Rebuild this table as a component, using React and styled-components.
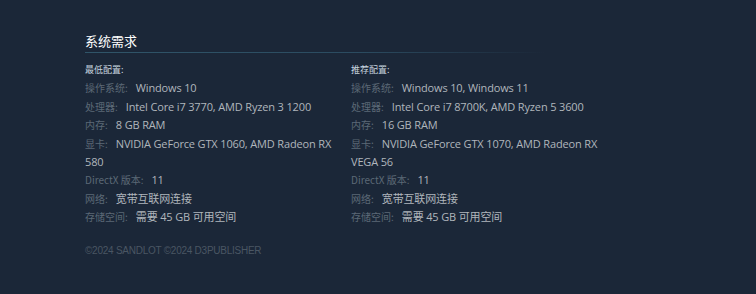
import React from "react";
import styled, { createGlobalStyle } from "styled-components";

const GlobalStyle = createGlobalStyle`
  html, body {
    margin: 0;
    padding: 0;
    background: #1b2738;
  }
`;

const minimum = [
  ["操作系统:", "Windows 10"],
  ["处理器:", "Intel Core i7 3770, AMD Ryzen 3 1200"],
  ["内存:", "8 GB RAM"],
  ["显卡:", "NVIDIA GeForce GTX 1060, AMD Radeon RX 580"],
  ["DirectX 版本:", "11"],
  ["网络:", "宽带互联网连接"],
  ["存储空间:", "需要 45 GB 可用空间"],
];

const recommended = [
  ["操作系统:", "Windows 10, Windows 11"],
  ["处理器:", "Intel Core i7 8700K, AMD Ryzen 5 3600"],
  ["内存:", "16 GB RAM"],
  ["显卡:", "NVIDIA GeForce GTX 1070, AMD Radeon RX VEGA 56"],
  ["DirectX 版本:", "11"],
  ["网络:", "宽带互联网连接"],
  ["存储空间:", "需要 45 GB 可用空间"],
];

const App = () => {
  return (
    <>
      <GlobalStyle />
      <Page>
        <Title>系统需求</Title>
        <Columns>
          <ReqColumn heading="最低配置:" items={minimum} />
          <ReqColumn heading="推荐配置:" items={recommended} />
        </Columns>
        <Legal>©2024 SANDLOT ©2024 D3PUBLISHER</Legal>
      </Page>
    </>
  );
};

const ReqColumn = ({ heading, items }) => (
  <Column>
    <SubHead>{heading}</SubHead>
    <List>
      {items.map(([label, value]) => (
        <Item key={label}>
          <Label>{label}</Label>
          {value}
        </Item>
      ))}
    </List>
  </Column>
);

const Page = styled.div`
  width: 756px;
  height: 294px;
  box-sizing: border-box;
  padding: 32px 0 0 85px;
  background: #1b2738;
  font-family: "Open Sans", "Noto Sans CJK SC", sans-serif;
`;

const Title = styled.h2`
  margin: 0;
  width: 460px;
  padding-bottom: 4px;
  font-family: "Noto Sans CJK SC", sans-serif;
  font-size: 13px;
  font-weight: 400;
  line-height: 17px;
  color: #ffffff;
  background-image: linear-gradient(to right, #305569 0%, #2b4b60 60%, rgba(43, 75, 96, 0) 100%);
  background-repeat: no-repeat;
  background-size: 100% 1px;
  background-position: left bottom;
`;

const Columns = styled.div`
  display: grid;
  grid-template-columns: 266px 266px;
  margin-top: 10px;
`;

const Column = styled.div`
  padding-right: 10px;
`;

const SubHead = styled.div`
  font-family: "Noto Sans CJK SC", sans-serif;
  font-size: 9px;
  line-height: 14px;
  color: #c6d4df;
  margin-bottom: 2px;
`;

const List = styled.ul`
  list-style: none;
  margin: 0;
  padding: 0;
`;

const Item = styled.li`
  font-size: 11px;
  letter-spacing: -0.15px;
  line-height: 18px;
  margin-bottom: 0.5px;
  color: #b0b6bc;
  width: 250px;
`;

const Label = styled.span`
  font-family: "Noto Sans CJK SC", sans-serif;
  font-size: 10px;
  letter-spacing: 0;
  line-height: 1;
  color: #5c6976;
  margin-right: 8px;
`;

const Legal = styled.div`
  margin-top: 17px;
  font-family: "Liberation Sans", Arial, sans-serif;
  font-size: 10px;
  letter-spacing: -0.25px;
  line-height: 14px;
  color: #4a5663;
`;

export default App;
